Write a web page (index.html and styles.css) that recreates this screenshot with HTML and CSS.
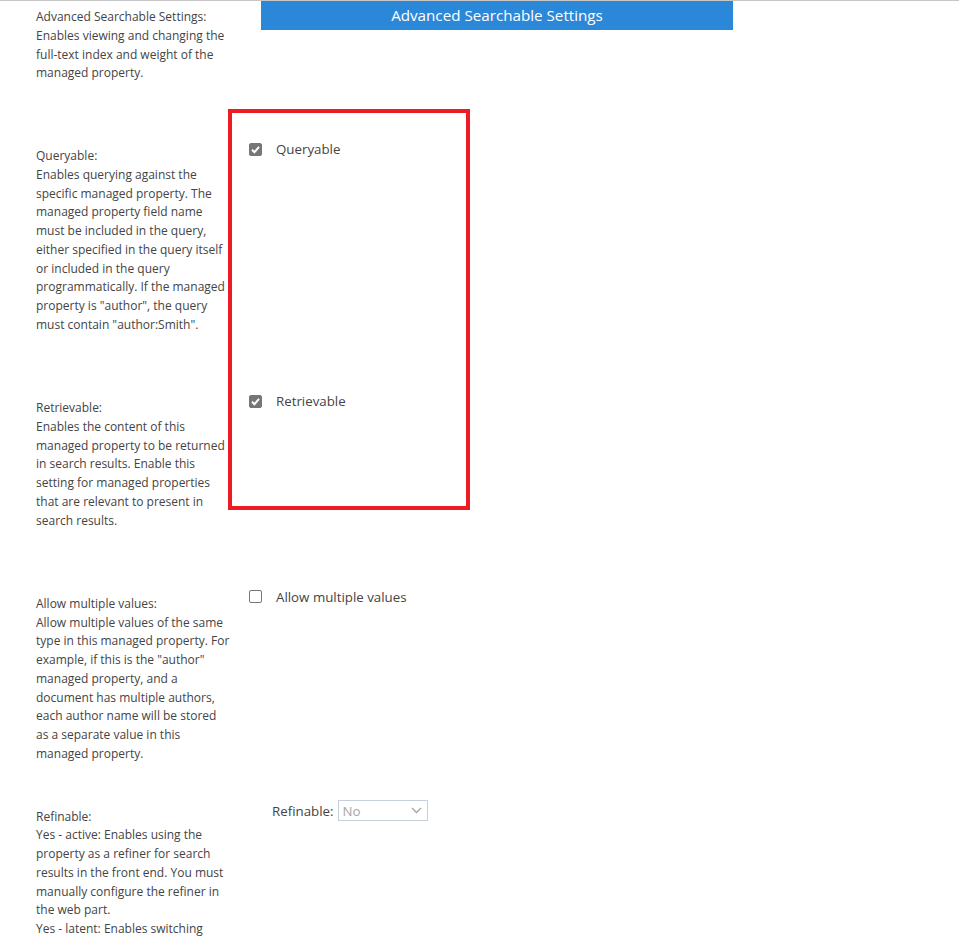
FILE: index.html
```html
<!DOCTYPE html>
<html lang="en">
<head>
  <meta charset="UTF-8" />
  <title>Managed Property - Advanced Searchable Settings</title>
  <link rel="stylesheet" href="styles.css">
</head>
<body>
  <div class="page">
    <div class="row first">
      <div class="desc">
        Advanced Searchable Settings:<br>
        Enables viewing and changing the full-text index and weight of the managed property.
      </div>
      <div class="ctrl">
        <div class="section-bar">Advanced Searchable Settings</div>
      </div>
    </div>

    <div class="row">
      <div class="desc">
        Queryable:<br>
        Enables querying against the specific managed property. The managed property field name must be included in the query, either specified in the query itself or included in the query programmatically. If the managed property is "author", the query must contain "author:Smith".
      </div>
      <div class="ctrl">
        <label class="check">
          <span class="box checked">
            <svg width="13" height="13" viewBox="0 0 13 13"><path d="M3 6.8 L5.4 9.2 L10 3.8" fill="none" stroke="#fff" stroke-width="2"/></svg>
          </span>
          Queryable
        </label>
      </div>
    </div>

    <div class="row">
      <div class="desc">
        Retrievable:<br>
        Enables the content of this managed property to be returned in search results. Enable this setting for managed properties that are relevant to present in search results.
      </div>
      <div class="ctrl">
        <label class="check">
          <span class="box checked">
            <svg width="13" height="13" viewBox="0 0 13 13"><path d="M3 6.8 L5.4 9.2 L10 3.8" fill="none" stroke="#fff" stroke-width="2"/></svg>
          </span>
          Retrievable
        </label>
      </div>
    </div>

    <div class="row tight">
      <div class="desc">
        Allow multiple values:<br>
        Allow multiple values of the same type in this managed property. For example, if this is the "author" managed property, and a document has multiple authors, each author name will be stored as a separate value in this managed property.
      </div>
      <div class="ctrl">
        <label class="check">
          <span class="box"></span>
          Allow multiple values
        </label>
      </div>
    </div>

    <div class="row">
      <div class="desc">
        Refinable:<br>
        Yes - active: Enables using the property as a refiner for search results in the front end. You must manually configure the refiner in the web part.<br>
        Yes - latent: Enables switching refining on later, without having to do a full re-crawl of the content.
      </div>
      <div class="ctrl">
        <div class="field">
          <span class="field-label">Refinable:</span>
          <div class="select">
            <span>No</span>
            <svg width="11" height="7" viewBox="0 0 11 7"><path d="M1 1 L5.5 5.5 L10 1" fill="none" stroke="#a6a6a6" stroke-width="1.4"/></svg>
          </div>
        </div>
      </div>
    </div>

    <!-- highlight frame around the queryable / retrievable options -->
    <div class="highlight"></div>
  </div>
</body>
</html>
```

FILE: styles.css
```css
body {
  margin: 0;
  border-top: 1px solid #c6c6c6;
  background: #fff;
  color: #444;
  font-family: 'Open Sans', 'Noto Sans', sans-serif;
}

.page {
  position: relative;
}

/* Two column form rows: description on the left, control on the right */
.row {
  display: flex;
  align-items: flex-start;
  padding-bottom: 56.5px;
}

.row.first {
  padding-bottom: 56px;
}

.row.tight {
  padding-bottom: 36px;
}

.desc {
  width: 195px;
  margin-left: 36px;
  margin-right: 5px;
  padding-top: 8px;
  font-size: 12px;
  line-height: 18.75px;
}

.row.first .desc {
  padding-top: 7px;
}

.ctrl {
  margin-left: 12px;
  flex: 1;
}

.section-bar {
  width: 472px;
  height: 29px;
  margin-left: 13px;
  background-color: #2b88d8;
  color: #fff;
  font-size: 15.2px;
  line-height: 29px;
  text-align: center;
}

/* Checkboxes */
.check {
  display: flex;
  align-items: center;
  height: 20px;
  font-size: 13.3px;
  padding-left: 1px;
}

.box {
  width: 13px;
  height: 13px;
  box-sizing: border-box;
  border: 1px solid #767676;
  border-radius: 2px;
  background: #fff;
  margin-right: 14px;
  position: relative;
}

.box.checked {
  background: #767676;
}

.box svg {
  position: absolute;
  left: -1px;
  top: -1px;
}

/* Refinable dropdown */
.field {
  display: flex;
  align-items: center;
  margin-left: 24px;
  height: 22px;
}

.field-label {
  font-size: 13.3px;
  margin-right: 4px;
}

.select {
  width: 90px;
  height: 21px;
  box-sizing: border-box;
  border: 1px solid #c6d0da;
  display: flex;
  align-items: center;
  justify-content: space-between;
  padding: 0 5px 0 4px;
  color: #a6a6a6;
  font-size: 13.3px;
}

.highlight {
  position: absolute;
  left: 228px;
  top: 108px;
  width: 242px;
  height: 401px;
  box-sizing: border-box;
  border: 4px solid #ed1c24;
}
```
